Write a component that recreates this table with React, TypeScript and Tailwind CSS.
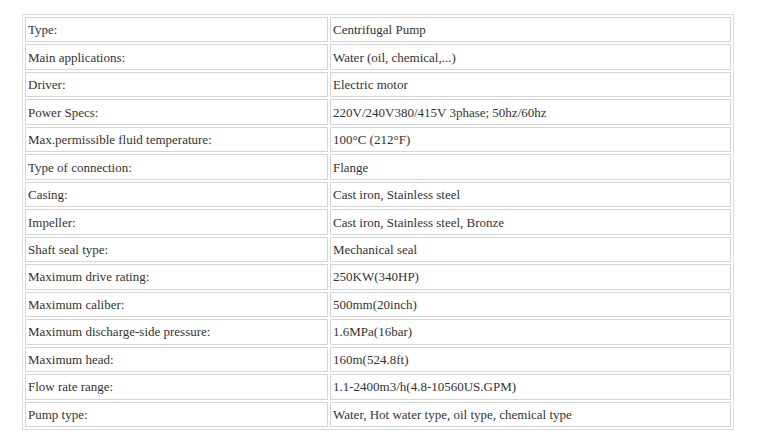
const specs: [string, string][] = [
  ['Type:', 'Centrifugal Pump'],
  ['Main applications:', 'Water (oil, chemical,...)'],
  ['Driver:', 'Electric motor'],
  ['Power Specs:', '220V/240V380/415V 3phase; 50hz/60hz'],
  ['Max.permissible fluid temperature:', '100°C (212°F)'],
  ['Type of connection:', 'Flange'],
  ['Casing:', 'Cast iron, Stainless steel'],
  ['Impeller:', 'Cast iron, Stainless steel, Bronze'],
  ['Shaft seal type:', 'Mechanical seal'],
  ['Maximum drive rating:', '250KW(340HP)'],
  ['Maximum caliber:', '500mm(20inch)'],
  ['Maximum discharge-side pressure:', '1.6MPa(16bar)'],
  ['Maximum head:', '160m(524.8ft)'],
  ['Flow rate range:', '1.1-2400m3/h(4.8-10560US.GPM)'],
  ['Pump type:', 'Water, Hot water type, oil type, chemical type'],
];

const cell =
  "h-[25.47px] border border-[#d4d4d4] px-[2px] py-0 align-middle leading-none font-[Liberation_Serif,serif] text-[13px] text-[#333]";

export default function App() {
  return (
    <div className="w-[765px] h-[446px] bg-white pt-[14px] pl-[22px]">
      <table className="w-[712px] table-fixed border-separate border-spacing-[2px] border border-[#dcdcdc]">
        <colgroup>
          <col className="w-[303px]" />
          <col className="w-[401px]" />
        </colgroup>
        <tbody>
          {specs.map(([label, value]) => (
            <tr key={label}>
              <td className={cell}>{label}</td>
              <td className={cell}>{value}</td>
            </tr>
          ))}
        </tbody>
      </table>
    </div>
  );
}
